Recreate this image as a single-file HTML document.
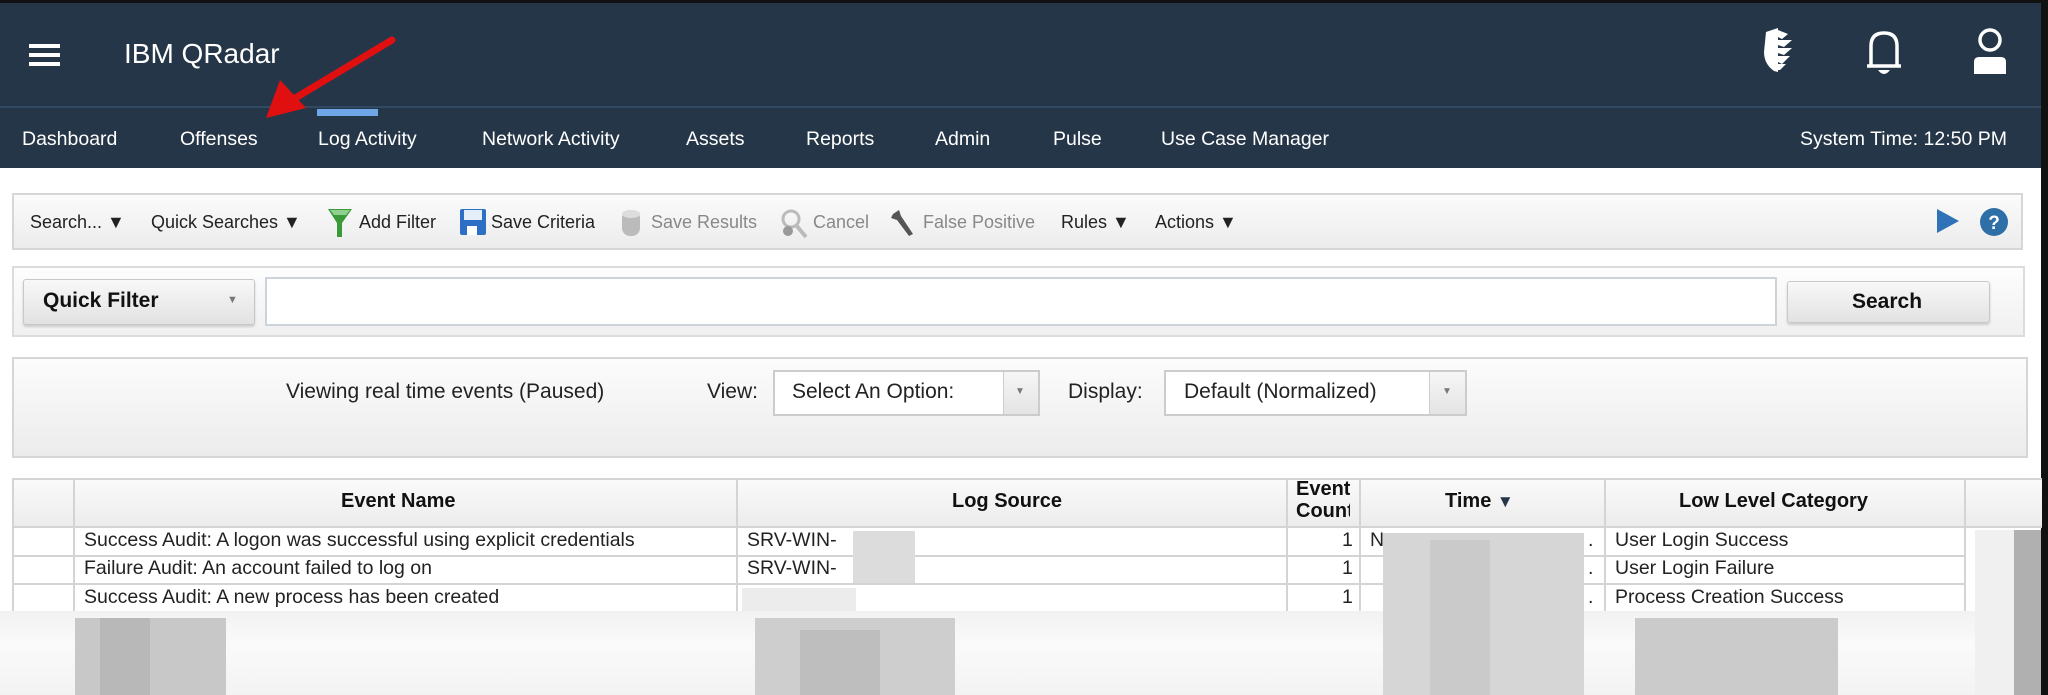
<!DOCTYPE html>
<html><head><meta charset="utf-8"><style>
*{margin:0;padding:0;box-sizing:border-box}
body{width:2048px;height:695px;overflow:hidden;background:#fff;font-family:"Liberation Sans",Arial,sans-serif;position:relative;color:#222}
.a{position:absolute;white-space:nowrap}
.hdr{position:absolute;left:0;top:0;width:2048px;height:168px;background:#253648}
.nav{color:#fff;font-size:19.5px;top:128px}
.tb{font-size:18px;top:212px;color:#222}
.dis{color:#888}
.cell{font-size:19.5px;color:#222}
.hline{position:absolute;height:2px;background:#d4d4d4}
.vline{position:absolute;width:2px;background:#d4d4d4}
.th{font-size:20px;font-weight:bold;color:#111}
</style></head><body>
<div class="a" style="left:0;top:0;width:2048px;height:3px;background:#111"></div>
<div class="hdr" style="top:3px;height:165px"></div>
<div class="a" style="left:0;top:106px;width:2048px;height:2px;background:#2f4a62"></div>
<div class="a" style="left:29px;top:44px;width:31px;height:4px;background:#fff"></div>
<div class="a" style="left:29px;top:53px;width:31px;height:4px;background:#fff"></div>
<div class="a" style="left:29px;top:62px;width:31px;height:4px;background:#fff"></div>
<div class="a" style="left:124px;top:38px;font-size:28px;color:#fff">IBM QRadar</div>
<svg class="a" style="left:0;top:0" width="420" height="130"><path d="M392 40 L292 100" stroke="#e01010" stroke-width="7" stroke-linecap="round"/><path d="M266 118 L280 80 L306 108 Z" fill="#e01010"/></svg>
<div class="a" style="left:317px;top:109px;width:61px;height:7px;background:#6ea6e8"></div>
<div class="a nav" style="left:22px">Dashboard</div>
<div class="a nav" style="left:180px">Offenses</div>
<div class="a nav" style="left:318px">Log Activity</div>
<div class="a nav" style="left:482px">Network Activity</div>
<div class="a nav" style="left:686px">Assets</div>
<div class="a nav" style="left:806px">Reports</div>
<div class="a nav" style="left:935px">Admin</div>
<div class="a nav" style="left:1053px">Pulse</div>
<div class="a nav" style="left:1161px">Use Case Manager</div>
<div class="a nav" style="left:1800px">System Time: 12:50 PM</div>
<svg class="a" style="left:1760px;top:26px" width="270" height="50">
<path d="M6 6 L18 2 L18 46 L14 45 Q4 38 4 26 Z" fill="#fff"/>
<path d="M18 4 L28 8 L22 13 L18 11Z M18 14 L32 14 L24 21 L18 19Z M18 22 L32 22 L24 29 L18 27Z M18 30 L30 30 L22 38 L18 36Z M18 38 L26 38 L20 44 L18 44Z" fill="#fff"/>
<path d="M111 40 L111 20 Q111 7 124 7 Q137 7 137 20 L137 40 Z M107 40 L141 40" fill="none" stroke="#fff" stroke-width="3.5" stroke-linejoin="round"/>
<path d="M118 44 L130 44 Q124 52 118 44Z" fill="#fff"/>
<circle cx="230" cy="14" r="10" fill="none" stroke="#fff" stroke-width="3.5"/>
<path d="M214 48 L214 36 Q214 31 219 31 L241 31 Q246 31 246 36 L246 48Z" fill="#fff"/>
</svg>
<div class="a" style="left:2041px;top:0;width:7px;height:695px;background:#111"></div>
<div class="a" style="left:12px;top:193px;width:2011px;height:57px;border:2px solid #d6d6d6;background:linear-gradient(#fbfbfb,#ececec)"></div>
<div class="a tb" style="left:30px">Search... ▼</div>
<div class="a tb" style="left:151px">Quick Searches ▼</div>
<svg class="a" style="left:326px;top:207px" width="30" height="32"><path d="M2 2 L26 2 L16 16 L16 30 L11 30 L11 16Z" fill="#3a9a3a"/><path d="M4 3 L24 3 L20 8 L8 8Z" fill="#8fd08f"/></svg>
<div class="a tb" style="left:359px">Add Filter</div>
<svg class="a" style="left:459px;top:208px" width="28" height="28"><rect x="1" y="1" width="26" height="26" rx="2" fill="#2d6fc4"/><rect x="5" y="2" width="18" height="10" fill="#e4eef8"/><rect x="8" y="18" width="10" height="9" fill="#fff"/></svg>
<div class="a tb" style="left:491px">Save Criteria</div>
<svg class="a" style="left:619px;top:208px" width="26" height="30"><rect x="3" y="2" width="18" height="26" rx="8" fill="#bbb"/><ellipse cx="12" cy="6" rx="9" ry="4" fill="#ddd"/></svg>
<div class="a tb dis" style="left:651px">Save Results</div>
<svg class="a" style="left:779px;top:208px" width="30" height="32"><circle cx="12" cy="11" r="8" fill="none" stroke="#bbb" stroke-width="3"/><path d="M17 17 L27 29" stroke="#bbb" stroke-width="4"/><circle cx="9" cy="23" r="5" fill="#999"/></svg>
<div class="a tb dis" style="left:813px">Cancel</div>
<svg class="a" style="left:889px;top:208px" width="28" height="30"><path d="M4 6 L10 2 L12 8 L24 26 L20 28 L8 12 L2 10Z" fill="#555"/></svg>
<div class="a tb dis" style="left:923px">False Positive</div>
<div class="a tb" style="left:1061px">Rules ▼</div>
<div class="a tb" style="left:1155px">Actions ▼</div>
<svg class="a" style="left:1935px;top:208px" width="26" height="26"><path d="M2 1 L24 13 L2 25Z" fill="#2f72b8"/></svg>
<svg class="a" style="left:1979px;top:207px" width="30" height="30"><circle cx="15" cy="15" r="14" fill="#2f6fa8"/><text x="15" y="22" text-anchor="middle" font-family="Liberation Sans" font-weight="bold" font-size="19" fill="#fff">?</text></svg>
<div class="a" style="left:12px;top:266px;width:2013px;height:71px;border:2px solid #dcdcdc;background:linear-gradient(#fdfdfd,#f0f0f0)"></div>
<div class="a" style="left:23px;top:279px;width:232px;height:46px;border:1px solid #c8c8c8;border-radius:3px;background:linear-gradient(#f8f8f8,#e2e2e2);box-shadow:0 2px 2px #ccc"></div>
<div class="a" style="left:43px;top:289px;font-size:21px;font-weight:bold;color:#111">Quick Filter</div>
<div class="a" style="left:227px;top:294px;font-size:11px;color:#777">▼</div>
<div class="a" style="left:265px;top:277px;width:1512px;height:49px;border:2px solid #cdd3db;background:#fff"></div>
<div class="a" style="left:1787px;top:281px;width:203px;height:42px;border:1px solid #c8c8c8;border-radius:3px;background:linear-gradient(#f8f8f8,#e2e2e2);box-shadow:0 2px 2px #ccc"></div>
<div class="a" style="left:1852px;top:290px;font-size:21px;font-weight:bold;color:#111">Search</div>
<div class="a" style="left:12px;top:357px;width:2016px;height:101px;border:2px solid #d6d6d6;background:linear-gradient(#fcfcfc,#ececec)"></div>
<div class="a" style="left:286px;top:380px;font-size:21px">Viewing real time events (Paused)</div>
<div class="a" style="left:707px;top:380px;font-size:21px">View:</div>
<div class="a" style="left:773px;top:370px;width:267px;height:46px;border:2px solid #ccc;background:#fff"></div>
<div class="a" style="left:1003px;top:372px;width:35px;height:42px;border-left:1px solid #ccc;background:linear-gradient(#f6f6f6,#e4e4e4)"></div>
<div class="a" style="left:1015px;top:386px;font-size:10px;color:#777">▼</div>
<div class="a" style="left:792px;top:380px;font-size:21px">Select An Option:</div>
<div class="a" style="left:1068px;top:380px;font-size:21px">Display:</div>
<div class="a" style="left:1164px;top:370px;width:303px;height:46px;border:2px solid #ccc;background:#fff"></div>
<div class="a" style="left:1429px;top:372px;width:36px;height:42px;border-left:1px solid #ccc;background:linear-gradient(#f6f6f6,#e4e4e4)"></div>
<div class="a" style="left:1442px;top:386px;font-size:10px;color:#777">▼</div>
<div class="a" style="left:1184px;top:380px;font-size:21px">Default (Normalized)</div>
<div class="a" style="left:12px;top:478px;width:2030px;height:49px;background:linear-gradient(#fafafa,#ececec);border-top:2px solid #d4d4d4"></div>
<div class="hline" style="left:12px;top:526px;width:2030px"></div>
<div class="hline" style="left:12px;top:555px;width:1953px"></div>
<div class="hline" style="left:12px;top:583px;width:1953px"></div>
<div class="vline" style="left:12px;top:478px;height:133px"></div>
<div class="vline" style="left:73px;top:478px;height:133px"></div>
<div class="vline" style="left:736px;top:478px;height:133px"></div>
<div class="vline" style="left:1286px;top:478px;height:133px"></div>
<div class="vline" style="left:1359px;top:478px;height:133px"></div>
<div class="vline" style="left:1604px;top:478px;height:133px"></div>
<div class="vline" style="left:1964px;top:478px;height:133px"></div>
<div class="a th" style="left:341px;top:490px">Event Name</div>
<div class="a th" style="left:952px;top:490px">Log Source</div>
<div class="a th" style="left:1296px;top:478px;line-height:22px;width:54px;overflow:hidden">Event<br>Count</div>
<div class="a th" style="left:1445px;top:490px">Time <span style="font-size:17px;color:#253648">▼</span></div>
<div class="a th" style="left:1679px;top:490px">Low Level Category</div>
<div class="a cell" style="left:84px;top:529px">Success Audit: A logon was successful using explicit credentials</div>
<div class="a cell" style="left:84px;top:557px">Failure Audit: An account failed to log on</div>
<div class="a cell" style="left:84px;top:586px">Success Audit: A new process has been created</div>
<div class="a cell" style="left:747px;top:529px">SRV-WIN-</div>
<div class="a cell" style="left:747px;top:557px">SRV-WIN-</div>
<div class="a cell" style="left:1342px;top:529px">1</div>
<div class="a cell" style="left:1342px;top:557px">1</div>
<div class="a cell" style="left:1342px;top:586px">1</div>
<div class="a cell" style="left:1370px;top:529px">N</div>
<div class="a cell" style="left:1588px;top:529px">.</div>
<div class="a cell" style="left:1588px;top:557px">.</div>
<div class="a cell" style="left:1588px;top:586px">.</div>
<div class="a cell" style="left:1615px;top:529px">User Login Success</div>
<div class="a cell" style="left:1615px;top:557px">User Login Failure</div>
<div class="a cell" style="left:1615px;top:586px">Process Creation Success</div>
<div class="a" style="left:853px;top:531px;width:62px;height:52px;background:#dcdcdc"></div>
<div class="a" style="left:742px;top:588px;width:114px;height:30px;background:#ececec"></div>
<div class="a" style="left:0;top:611px;width:2041px;height:84px;background:linear-gradient(#f2f2f2,#fafafa 40%,#f3f3f3)"></div>
<div class="a" style="left:75px;top:618px;width:151px;height:77px;background:#c8c8c8"></div>
<div class="a" style="left:100px;top:618px;width:50px;height:77px;background:#b8b8b8"></div>
<div class="a" style="left:755px;top:618px;width:200px;height:77px;background:#cecece"></div>
<div class="a" style="left:800px;top:630px;width:80px;height:65px;background:#bebebe"></div>
<div class="a" style="left:1383px;top:533px;width:201px;height:162px;background:#d6d6d6"></div>
<div class="a" style="left:1430px;top:540px;width:60px;height:155px;background:#cacaca"></div>
<div class="a" style="left:1635px;top:618px;width:203px;height:77px;background:#cbcbcb"></div>
<div class="a" style="left:1975px;top:530px;width:40px;height:165px;background:#f0f0f0"></div>
<div class="a" style="left:2014px;top:530px;width:27px;height:165px;background:#b0b0b0"></div>
</body></html>
